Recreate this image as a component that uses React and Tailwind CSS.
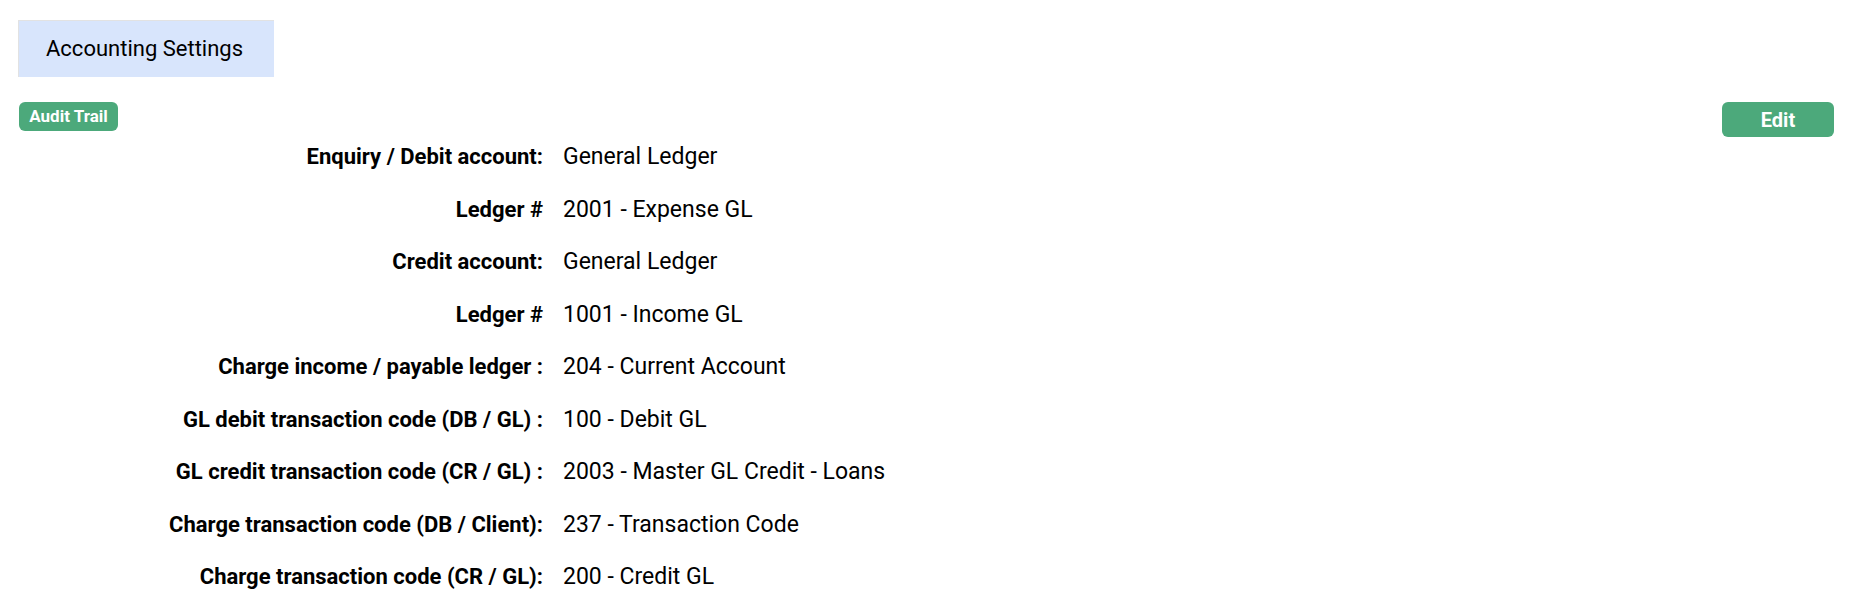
import React from "react";

const rows = [
  ["Enquiry / Debit account:", "General Ledger"],
  ["Ledger #", "2001 - Expense GL"],
  ["Credit account:", "General Ledger"],
  ["Ledger #", "1001 - Income GL"],
  ["Charge income / payable ledger :", "204 - Current Account"],
  ["GL debit transaction code (DB / GL) :", "100 - Debit GL"],
  ["GL credit transaction code (CR / GL) :", "2003 - Master GL Credit - Loans"],
  ["Charge transaction code (DB / Client):", "237 - Transaction Code"],
  ["Charge transaction code (CR / GL):", "200 - Credit GL"],
];

export default function App() {
  return (
    <div
      className="min-h-[609px] bg-white text-black pl-[18px] pr-[19px] pt-[20px]"
      style={{ fontFamily: "Roboto, 'Open Sans', sans-serif" }}
    >
      {/* tab header */}
      <div className="w-[256px] h-[57px] bg-[#d8e5fc] border-t border-l border-[#e2e2e2] flex items-center pl-[27px] text-[22px] leading-none whitespace-nowrap">
        Accounting Settings
      </div>

      {/* toolbar */}
      <div className="mt-[25px] h-[29px] flex justify-between items-start">
        <button className="h-[29px] w-[99px] ml-[1px] rounded-[6px] bg-[#4ca97b] text-white font-bold text-[17px] leading-none flex items-center justify-center">
          Audit Trail
        </button>
        <button className="h-[35px] w-[112px] rounded-[6px] bg-[#4ca97b] text-white font-bold text-[20px] leading-none flex items-center justify-center">
          Edit
        </button>
      </div>

      {/* settings list */}
      <div className="grid grid-cols-[525px_1fr] gap-x-5 auto-rows-[52.5px] leading-[52.5px]">
        {rows.map(([label, value], i) => (
          <React.Fragment key={i}>
            <div className="text-right font-bold text-[22px] whitespace-nowrap">{label}</div>
            <div className="text-[23px] whitespace-nowrap">{value}</div>
          </React.Fragment>
        ))}
      </div>
    </div>
  );
}
